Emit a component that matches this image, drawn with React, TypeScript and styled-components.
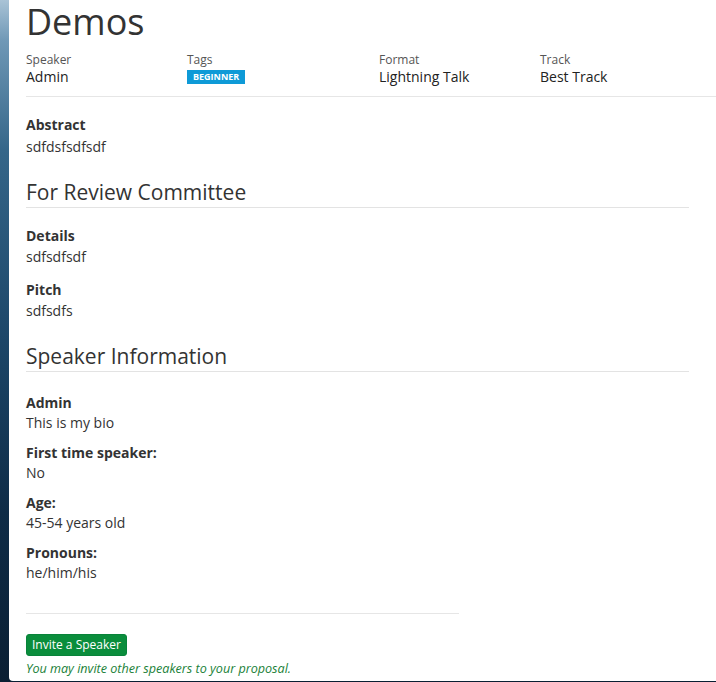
import React from 'react';
import styled, { createGlobalStyle } from 'styled-components';

const GlobalStyle = createGlobalStyle`
  html, body {
    margin: 0;
    padding: 0;
  }
  body {
    font-family: 'Open Sans', 'Liberation Sans', sans-serif;
    font-size: 14px;
    line-height: 20px;
    color: #333333;
    background: #ffffff;
  }
`;

/**
 * Page frame: ocean backdrop with the white proposal panel on top
 *
 */
const Page = styled.div`
  display: flex;
  height: 682px;
  overflow: hidden;
  background: linear-gradient(
    180deg,
    #a9c3d6 0%,
    #6f98b6 6%,
    #356689 22%,
    #1c4668 50%,
    #0f2c47 75%,
    #0a1f33 100%
  );
`;

const Panel = styled.div`
  flex: 1;
  margin-left: 9px;
  height: 681px;
  padding: 0 0 0 17px;
  box-sizing: border-box;
  background: #ffffff;
  border-bottom-left-radius: 4px;
`;

const Title = styled.h1`
  margin: 0;
  font-size: 36px;
  font-weight: 400;
  line-height: 44px;
  color: #333333;
`;

/**
 * Meta row
 *
 */
const MetaRow = styled.div`
  display: grid;
  grid-template-columns: 161px 192px 161px 1fr;
  margin-top: 8px;
  padding-bottom: 9px;
  border-bottom: 1px solid #e6e6e6;
`;

const MetaItem = styled.div`
  display: flex;
  flex-direction: column;
`;

const MetaLabel = styled.span`
  font-size: 12px;
  line-height: 16px;
  color: #555555;
`;

const MetaValue = styled.span`
  margin-top: -1px;
  font-size: 14px;
  line-height: 20px;
  color: #222222;
`;

const Badge = styled.span`
  align-self: flex-start;
  margin-top: 2px;
  padding: 0 6px;
  font-size: 9px;
  font-weight: 700;
  line-height: 14px;
  text-transform: uppercase;
  color: #ffffff;
  background: #0e9ad7;
`;

/**
 * Body sections
 *
 */
const Body = styled.div`
  width: 663px;
  padding-top: 18px;
`;

const SectionTitle = styled.h3`
  margin: 22px 0 0 0;
  padding-bottom: 2px;
  font-size: 21px;
  font-weight: 400;
  line-height: 26px;
  color: #333333;
  border-bottom: 1px solid #e3e3e3;
`;

const SectionBody = styled.div<{ $top: number }>`
  display: flex;
  flex-direction: column;
  padding-top: ${(p) => p.$top}px;
`;

const Field = styled.div<{ $gap: number; $spread: number }>`
  display: flex;
  flex-direction: column;
  gap: ${(p) => p.$spread}px;
  margin-bottom: ${(p) => p.$gap}px;

  &:last-child {
    margin-bottom: 0;
  }
`;

const FieldLabel = styled.strong`
  font-weight: 700;
  color: #333333;
`;

const FieldValue = styled.span`
  color: #333333;
`;

const Divider = styled.div`
  width: 433px;
  margin-top: 30px;
  border-top: 1px solid #e6e6e6;
`;

const InviteButton = styled.button`
  display: block;
  margin-top: 20px;
  height: 22px;
  padding: 0 5px;
  font-family: inherit;
  font-size: 12px;
  line-height: 20px;
  color: #ffffff;
  background: #0a8d3c;
  border: 1px solid #08833a;
  border-radius: 3px;
  cursor: pointer;
`;

const HelpText = styled.p`
  margin: 3px 0 0 0;
  font-size: 12.6px;
  font-style: italic;
  line-height: 20px;
  color: #1a7f38;
`;

const meta = [
  { label: 'Speaker', value: 'Admin' },
  { label: 'Tags', tag: 'Beginner' },
  { label: 'Format', value: 'Lightning Talk' },
  { label: 'Track', value: 'Best Track' },
];

const review = [
  { label: 'Details', value: 'sdfsdfsdf' },
  { label: 'Pitch', value: 'sdfsdfs' },
];

const speaker = [
  { label: 'Admin', value: 'This is my bio' },
  { label: 'First time speaker:', value: 'No' },
  { label: 'Age:', value: '45-54 years old' },
  { label: 'Pronouns:', value: 'he/him/his' },
];

const App: React.FC = () => {
  return (
    <>
      <GlobalStyle />
      <Page>
        <Panel>
          <Title>Demos</Title>
          <MetaRow>
            {meta.map((m) => (
              <MetaItem key={m.label}>
                <MetaLabel>{m.label}</MetaLabel>
                {m.tag ? <Badge>{m.tag}</Badge> : <MetaValue>{m.value}</MetaValue>}
              </MetaItem>
            ))}
          </MetaRow>

          <Body>
            <Field $gap={0} $spread={2}>
              <FieldLabel>Abstract</FieldLabel>
              <FieldValue>sdfdsfsdfsdf</FieldValue>
            </Field>

            <SectionTitle>For Review Committee</SectionTitle>
            <SectionBody $top={18}>
              {review.map((f) => (
                <Field key={f.label} $gap={13} $spread={1}>
                  <FieldLabel>{f.label}</FieldLabel>
                  <FieldValue>{f.value}</FieldValue>
                </Field>
              ))}
            </SectionBody>

            <SectionTitle>Speaker Information</SectionTitle>
            <SectionBody $top={21}>
              {speaker.map((f) => (
                <Field key={f.label} $gap={10} $spread={0}>
                  <FieldLabel>{f.label}</FieldLabel>
                  <FieldValue>{f.value}</FieldValue>
                </Field>
              ))}
            </SectionBody>

            <Divider />
            <InviteButton>Invite a Speaker</InviteButton>
            <HelpText>You may invite other speakers to your proposal.</HelpText>
          </Body>
        </Panel>
      </Page>
    </>
  );
};

export default App;
